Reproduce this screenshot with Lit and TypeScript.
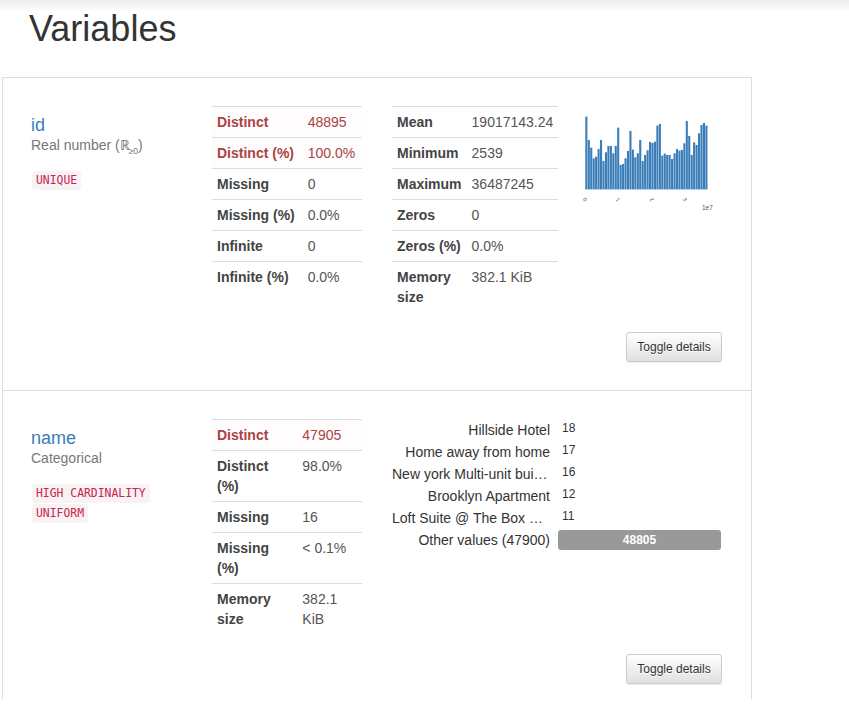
import { LitElement, html, css, svg } from "lit";
import { customElement } from "lit/decorators.js";

const tops = [50,120,143,175,170,147,120,183,157,138,138,160,138,83,195,192,175,153,93,149,172,160,120,183,165,151,126,129,125,77,72,167,161,165,165,177,160,147,152,150,130,63,108,165,127,135,100,75,69,77];

type Row = [string, string, boolean?];
const idA: Row[] = [["Distinct","48895",true],["Distinct (%)","100.0%",true],["Missing","0"],["Missing (%)","0.0%"],["Infinite","0"],["Infinite (%)","0.0%"]];
const idB: Row[] = [["Mean","19017143.24"],["Minimum","2539"],["Maximum","36487245"],["Zeros","0"],["Zeros (%)","0.0%"],["Memory size","382.1 KiB"]];
const nameA: Row[] = [["Distinct","47905",true],["Distinct (%)","98.0%"],["Missing","16"],["Missing (%)","< 0.1%"],["Memory size","382.1 KiB"]];
const freq: [string, string][] = [["Hillside Hotel","18"],["Home away from home","17"],["New york Multi-unit building","16"],["Brooklyn Apartment","12"],["Loft Suite @ The Box House Hotel","11"]];

@customElement("app-root")
export class AppRoot extends LitElement {
  static styles = css`
    :host { display: block; font-family: "Liberation Sans", Arial, sans-serif; font-size: 14px; line-height: 20px; color: #333; }
    .page { background: linear-gradient(#ececec, #ffffff) no-repeat top / 100% 12px; padding: 9px 97px 0 2px; }
    h1 { margin: 0 0 28px 27px; font-size: 36px; line-height: 40px; font-weight: 500; color: #333; }
    .card { border: 1px solid #ddd; border-bottom: 0; }
    .row { padding: 28px 14px 28px; }
    .row + .row { border-top: 1px solid #ddd; padding-bottom: 15px; }
    .cols { display: grid; grid-template-columns: repeat(4, 180px); }
    .cols > div { padding: 0 15px; min-width: 0; }
    .cols > .wide { grid-column: span 2; padding: 0 16px 0 15px; }
    .cols > .info { padding: 9px 15px 0 14px; }
    .title { color: #3a7db8; font-size: 18px; line-height: 20px; }
    .type { color: #777; font-size: 14px; line-height: 20px; }
    .type sub { font-size: 8.5px; line-height: 0; margin-left: -1px; }
    .tags { margin: 16px 0 0 1px; display: flex; flex-direction: column; align-items: flex-start; gap: 1px; }
    code { display: block; font-family: "DejaVu Sans Mono", monospace; font-size: 11.4px; line-height: 15px; padding: 2px 4px; color: #c7254e; background: #f9f2f4; border-radius: 4px; }
    table { border-collapse: collapse; width: 100%; }
    th, td { padding: 5px; text-align: left; vertical-align: top; border-top: 1px solid #ddd; font-size: 14px; line-height: 20px; }
    th { font-weight: 700; color: #444; }
    td { color: #555; }
    tr.alert th, tr.alert td { color: #a94442; background: #fefcfc; }
    .chart { display: block; width: 150px; height: 120px; }
    .chart text { font-family: "Liberation Sans", sans-serif; fill: #555; }
    .freq { display: grid; grid-template-columns: 158px 1fr; column-gap: 8px; }
    .label { height: 22px; line-height: 22px; text-align: right; white-space: nowrap; overflow: hidden; text-overflow: ellipsis; }
    .count { font-size: 12px; line-height: 18px; padding-left: 4px; height: 22px; }
    .bar { margin: 1px 0; height: 20px; background: #999; border-radius: 3px; color: #fff; font-size: 12px; font-weight: 700; line-height: 20px; text-align: center; }
    .actions { display: flex; justify-content: flex-end; padding-right: 15px; margin-top: 20px; }
    button { font-family: inherit; font-size: 12px; line-height: 18px; width: 96px; padding: 5px 0; color: #333; height: 30px; border: 1px solid #ccc; border-radius: 3px; background: linear-gradient(#fff, #e0e0e0); text-shadow: 0 1px 0 #fff; box-shadow: inset 0 1px 0 rgba(255,255,255,.15), 0 1px 1px rgba(0,0,0,.075); }
  `;

  table(rows: Row[]) {
    return html`<table>${rows.map(([k, v, a]) => html`<tr class=${a ? "alert" : ""}><th>${k}</th><td>${v}</td></tr>`)}</table>`;
  }

  chart() {
    return html`<svg class="chart" viewBox="0 0 150 120">
      ${tops.map((t, i) => {
        const h = (268 - t) / 3;
        return svg`<rect x=${13.3 + i * 2.45} y=${83.3 - h} width="2.1" height=${h} fill="#3a7db8"></rect>`;
      })}
      <rect x="13.3" y="83.3" width="122.4" height="0.7" fill="#a9c8e2"></rect>
      ${[["0", 13], ["1", 46], ["2", 79.7], ["3", 113]].map(([l, x]) => svg`<text font-size="5.5" text-anchor="middle" dominant-baseline="central" transform="translate(${x} 93.3) rotate(45)">${l}</text>`)}
      <text x="130" y="104" font-size="6.5">1e7</text>
    </svg>`;
  }

  render() {
    return html`<div class="page">
      <h1>Variables</h1>
      <div class="card">
        <div class="row">
          <div class="cols">
            <div class="info">
              <div class="title">id</div>
              <div class="type">Real number (ℝ<sub>≥0</sub>)</div>
              <div class="tags"><code>UNIQUE</code></div>
            </div>
            <div>${this.table(idA)}</div>
            <div>${this.table(idB)}</div>
            <div>${this.chart()}</div>
          </div>
          <div class="actions"><button>Toggle details</button></div>
        </div>
        <div class="row">
          <div class="cols">
            <div class="info">
              <div class="title">name</div>
              <div class="type">Categorical</div>
              <div class="tags"><code>HIGH CARDINALITY</code><code>UNIFORM</code></div>
            </div>
            <div>${this.table(nameA)}</div>
            <div class="wide">
              <div class="freq">
                ${freq.map(([l, c]) => html`<div class="label">${l}</div><div class="count">${c}</div>`)}
                <div class="label">Other values (47900)</div>
                <div class="bar">48805</div>
              </div>
            </div>
          </div>
          <div class="actions"><button>Toggle details</button></div>
        </div>
      </div>
    </div>`;
  }
}
